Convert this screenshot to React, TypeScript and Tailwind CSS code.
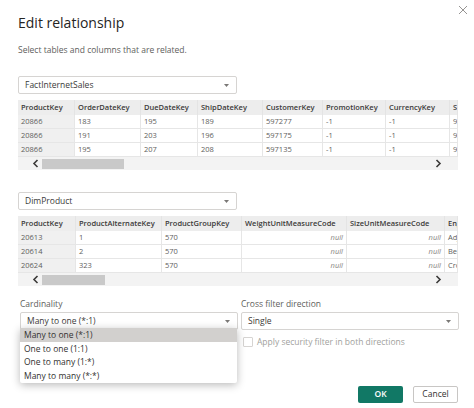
import React from "react";

interface Column {
    label: string;
    width: number;
}

const font = { fontFamily: '"Open Sans", "Noto Sans", sans-serif' };

const Chevron: React.FC<{ dir: "left" | "right" }> = ({ dir }) => (
    <svg width="8" height="9" viewBox="0 0 8 9" className="shrink-0">
        <path
            d={dir === "left" ? "M5.5 1 L2 4.5 L5.5 8" : "M2.5 1 L6 4.5 L2.5 8"}
            fill="none"
            stroke="#3b3a39"
            strokeWidth="1.6"
        />
    </svg>
);

const Caret = () => (
    <svg width="5" height="3" viewBox="0 0 5 3">
        <path d="M0 0 L5 0 L2.5 3 Z" fill="#7a7876" />
    </svg>
);

const Dropdown: React.FC<{ value: string; className?: string }> = ({ value, className }) => (
    <div className={`${className} h-[18px] border border-[#d6d4d2] rounded-[2px] bg-white flex items-center justify-between pl-[6px] pr-[7px] text-[8.5px] text-[#3b3a39]`}>
        <span>{value}</span>
        <Caret />
    </div>
);

const DataTable: React.FC<{
    columns: Column[];
    rows: { text: string; italic?: boolean }[][];
    thumbWidth: number;
}> = ({ columns, rows, thumbWidth }) => (
    <div className="w-[440px] ml-[18px] overflow-hidden text-[7.5px]">
        <div className="flex h-[15px] bg-[#ededed]">
            {columns.map((c) => (
                <div key={c.label} style={{ width: c.width }} className="shrink-0 pl-[3px] flex items-center font-semibold text-[#3b3a39] border-r border-[#e4e4e4] whitespace-nowrap overflow-hidden">
                    {c.label}
                </div>
            ))}
        </div>
        {rows.map((r, i) => (
            <div key={i} className="flex h-[14px]">
                {r.map((cell, j) => (
                    <div
                        key={j}
                        style={{ width: columns[j].width }}
                        className={`shrink-0 flex items-center whitespace-nowrap overflow-hidden border-b border-r border-[#e6e6e6] ${j === 0 ? "bg-[#f0f0f0] pl-[3px]" : "bg-white"} ${cell.italic ? "italic justify-end pr-[3px] text-[#8a8886]" : "pl-[3px] text-[#605e5c]"}`}
                    >
                        {cell.text}
                    </div>
                ))}
            </div>
        ))}
        <div className="h-[13px] bg-[#f3f3f3] flex items-center">
            <div className="w-[24px] flex justify-end pr-[2px]">
                <Chevron dir="left" />
            </div>
            <div style={{ width: thumbWidth }} className="h-[10px] bg-[#c9c9c9]" />
            <div className="flex-1" />
            <div className="w-[24px] flex justify-start">
                <Chevron dir="right" />
            </div>
        </div>
    </div>
);

const t1Cols: Column[] = [
    { label: "ProductKey", width: 57 },
    { label: "OrderDateKey", width: 66 },
    { label: "DueDateKey", width: 57 },
    { label: "ShipDateKey", width: 65 },
    { label: "CustomerKey", width: 60 },
    { label: "PromotionKey", width: 63 },
    { label: "CurrencyKey", width: 64 },
    { label: "S", width: 8 },
];

const t1Rows = [
    ["20866", "183", "195", "189", "597277", "-1", "-1", "9"],
    ["20866", "191", "203", "196", "597175", "-1", "-1", "9"],
    ["20866", "195", "207", "208", "597135", "-1", "-1", "9"],
].map((r) => r.map((text) => ({ text })));

const t2Cols: Column[] = [
    { label: "ProductKey", width: 58 },
    { label: "ProductAlternateKey", width: 86 },
    { label: "ProductGroupKey", width: 80 },
    { label: "WeightUnitMeasureCode", width: 105 },
    { label: "SizeUnitMeasureCode", width: 98 },
    { label: "Engl", width: 13 },
];

const t2Rows = [
    ["20613", "1", "570", "Adju"],
    ["20614", "2", "570", "Bear"],
    ["20624", "323", "570", "Crov"],
].map((r) => [
    { text: r[0] },
    { text: r[1] },
    { text: r[2] },
    { text: "null", italic: true },
    { text: "null", italic: true },
    { text: r[3] },
]);

export default function App() {
    return (
        <div style={font} className="relative w-[474px] h-[408px] bg-white overflow-hidden text-[#323130]">
            {/* close */}
            <svg className="absolute left-[458px] top-[5px]" width="10" height="10" viewBox="0 0 10 10">
                <path d="M1 1 L9 9 M9 1 L1 9" stroke="#8a8886" strokeWidth="0.9" />
            </svg>

            <div className="pt-[10px] pl-[18px] h-[36px] text-[14px] leading-[26px] text-[#252423]">Edit relationship</div>
            <div className="mt-[8px] pl-[18px] text-[8.5px] leading-[12px] text-[#605e5c]">Select tables and columns that are related.</div>

            <Dropdown value="FactInternetSales" className="mt-[20px] ml-[18px] w-[219px]" />
            <div className="mt-[6px]">
                <DataTable columns={t1Cols} rows={t1Rows} thumbWidth={82} />
            </div>

            <Dropdown value="DimProduct" className="mt-[22px] ml-[18px] w-[219px]" />
            <div className="mt-[6px]">
                <DataTable columns={t2Cols} rows={t2Rows} thumbWidth={63} />
            </div>

            <div className="mt-[12px] flex gap-[3px] pl-[20px]">
                <div className="w-[218px] relative">
                    <div className="text-[8.5px] leading-[12px] text-[#605e5c]">Cardinality</div>
                    <Dropdown value="Many to one (*:1)" className="mt-[2px] w-[218px] h-[17px]" />
                    <div className="mt-[5px] flex items-center">
                        <div className="w-[10px] h-[10px] bg-[#117865] rounded-[1px]" />
                    </div>
                    {/* open list */}
                    <div className="absolute left-0 top-[30px] w-[217px] bg-white shadow-[0_2px_8px_rgba(0,0,0,0.28)] rounded-[2px] text-[8.5px] text-[#323130]">
                        <div className="h-[14px] bg-[#d2d0ce] pl-[4px] flex items-center">Many to one (*:1)</div>
                        <div className="h-[14px] pl-[4px] flex items-center">One to one (1:1)</div>
                        <div className="h-[13px] pl-[4px] flex items-center">One to many (1:*)</div>
                        <div className="h-[14px] pl-[4px] flex items-center">Many to many (*:*)</div>
                    </div>
                </div>
                <div className="w-[218px]">
                    <div className="text-[8.5px] leading-[12px] text-[#605e5c]">Cross filter direction</div>
                    <Dropdown value="Single" className="mt-[2px] w-[218px] h-[17px]" />
                    <div className="mt-[6px] flex items-center gap-[4px] pl-[2px]">
                        <div className="w-[10px] h-[10px] border border-[#d6d4d2] rounded-[1px]" />
                        <span className="text-[8.5px] text-[#a19f9d]">Apply security filter in both directions</span>
                    </div>
                </div>
            </div>

            <div className="absolute left-[358px] top-[386px] flex gap-[10px]">
                <button className="w-[45px] h-[17px] bg-[#117865] rounded-[2px] text-white text-[8.5px] font-semibold">OK</button>
                <button className="w-[45px] h-[17px] bg-white border border-[#c8c6c4] rounded-[2px] text-[#323130] text-[8.5px]">Cancel</button>
            </div>
        </div>
    );
}
